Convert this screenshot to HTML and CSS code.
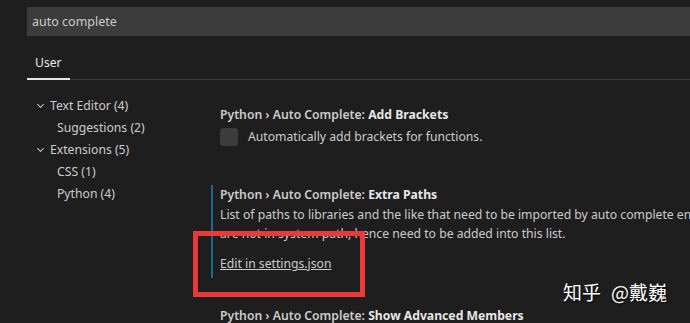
FILE: index.html
```html
<!DOCTYPE html>
<html lang="en">
<head>
    <meta charset="UTF-8">
    <title>Settings - auto complete</title>
    <link rel="stylesheet" href="styles.css">
</head>
<body>
    <div class="settings">
        <div class="search-box">auto complete</div>

        <div class="tab-bar">
            <span class="tab active">User</span>
        </div>

        <div class="settings-body">
            <ul class="toc">
                <li class="toc-group"><span class="chevron"></span>Text Editor (4)</li>
                <li class="toc-item">Suggestions (2)</li>
                <li class="toc-group"><span class="chevron"></span>Extensions (5)</li>
                <li class="toc-item">CSS (1)</li>
                <li class="toc-item">Python (4)</li>
            </ul>

            <div class="setting-list">
                <div class="setting">
                    <div class="setting-title">Python › Auto Complete: <b>Add Brackets</b></div>
                    <label class="setting-check">
                        <span class="checkbox"></span>
                        Automatically add brackets for functions.
                    </label>
                </div>

                <div class="setting focused">
                    <div class="setting-title">Python › Auto Complete: <b>Extra Paths</b></div>
                    <p class="setting-desc">
                        List of paths to libraries and the like that need to be imported by auto complete engine. E.g. when using Google App SDK, the paths<br>
                        are not in system path, hence need to be added into this list.
                    </p>
                    <a class="setting-link" href="#">Edit in settings.json</a>
                </div>

                <div class="setting">
                    <div class="setting-title">Python › Auto Complete: <b>Show Advanced Members</b></div>
                </div>
            </div>
        </div>
    </div>

    <!-- annotation overlay -->
    <div class="highlight-box"></div>
    <div class="watermark"><span>知乎</span><span>@戴巍</span></div>
</body>
</html>
```

FILE: styles.css
```css
body {
    margin: 0;
    background-color: #1e1e1e;
    color: #cccccc;
    font-family: "Noto Sans", "Open Sans", sans-serif;
    font-size: 12.2px;
    width: 690px;
    height: 323px;
    overflow: hidden;
    position: relative;
}

.settings {
    padding: 7px 0 0 27px;
    width: 1000px;
}

/* --- search --- */
.search-box {
    height: 29px;
    line-height: 30px;
    background-color: #3c3c3c;
    padding-left: 5px;
    color: #cccccc;
    font-size: 12.5px;
}

/* --- tabs --- */
.tab-bar {
    margin-top: 17px;
    border-bottom: 1px solid #3a3a3a;
    display: flex;
}

.tab {
    display: block;
    padding: 0 8px 5px;
    line-height: 20px;
    color: #e7e7e7;
}

.tab.active {
    border-bottom: 2px solid #e7e7e7;
    margin-bottom: -1px;
}

/* --- layout --- */
.settings-body {
    display: flex;
    margin-top: 15px;
}

.toc {
    list-style: none;
    margin: 0;
    padding: 0;
    width: 184px;
    flex-shrink: 0;
}

.toc li {
    height: 22px;
    line-height: 22px;
    color: #cccccc;
    display: flex;
    align-items: center;
}

.toc-group {
    padding-left: 9px;
}

.toc-item {
    padding-left: 30px;
}

.chevron {
    width: 4px;
    height: 4px;
    border-right: 1px solid #c5c5c5;
    border-bottom: 1px solid #c5c5c5;
    transform: rotate(45deg);
    margin: -3px 7px 0 2px;
}

/* --- settings --- */
.setting-list {
    padding-top: 10px;
}

.setting {
    border-left: 2px solid transparent;
    padding-left: 7px;
}

.setting + .setting {
    margin-top: 38px;
}

.setting.focused {
    border-left-color: #1a6c8c;
    padding-bottom: 4px;
}

.setting.focused + .setting {
    margin-top: 28px;
}

.setting-title {
    line-height: 20px;
    color: #cccccc;
    font-weight: 600;
}

.setting-title b {
    color: #e7e7e7;
    font-weight: 700;
}

.setting-check {
    display: flex;
    align-items: center;
    gap: 10px;
    height: 21px;
    margin-top: 1px;
}

.checkbox {
    width: 18px;
    height: 18px;
    background-color: #3c3c3c;
    border-radius: 3px;
}

.setting-desc {
    margin: 0;
    line-height: 19px;
    white-space: nowrap;
}

.setting-link {
    display: inline-block;
    margin-top: 11px;
    line-height: 20px;
    color: #cccccc;
    text-decoration: underline;
}

/* --- overlay annotation --- */
.highlight-box {
    position: absolute;
    left: 193px;
    top: 231px;
    width: 162px;
    height: 56px;
    border: 5px solid #e8393b;
}

.watermark {
    position: absolute;
    left: 563px;
    top: 280px;
    display: flex;
    gap: 10px;
    font-family: "Noto Sans CJK SC", sans-serif;
    font-size: 19px;
    line-height: 24px;
    color: #ffffff;
    text-shadow: 1px 1px 2px rgba(0, 0, 0, 0.8);
}
```
